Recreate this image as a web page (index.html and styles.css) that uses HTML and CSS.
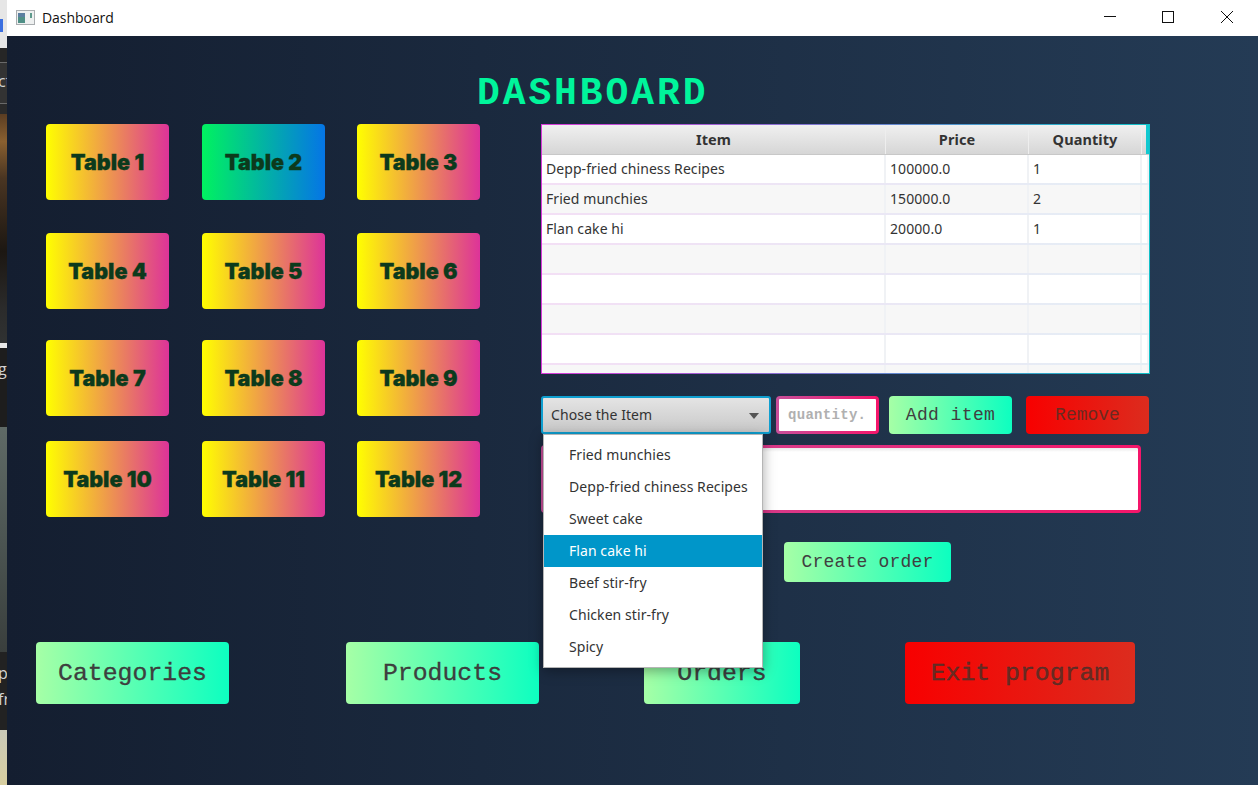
FILE: index.html
```html
<!DOCTYPE html>
<html lang="en">
<head>
<meta charset="utf-8">
<title>Dashboard</title>
<link rel="stylesheet" href="styles.css">
</head>
<body>
<div class="screen">
  <aside class="desktop-strip">
    <div class="strip strip-top"><span class="strip-blue"></span></div>
    <div class="strip strip-bar-a"></div>
    <div class="strip strip-bar-b"><span class="strip-text">ct</span></div>
    <div class="strip strip-bar-c"></div>
    <div class="strip strip-photo-brown"></div>
    <div class="strip strip-white"></div>
    <div class="strip strip-dark"><span class="strip-text">ge</span></div>
    <div class="strip strip-photo-grey"></div>
    <div class="strip strip-dark2"><span class="strip-text">p</span><span class="strip-text">fr</span></div>
    <div class="strip strip-photo-light"></div>
  </aside>
  <div class="window">
    <header class="titlebar">
      <svg class="app-icon" width="20" height="16" viewBox="0 0 20 16">
        <rect x="0.5" y="0.5" width="18" height="14" fill="#eef0f0" stroke="#a9adb0"/>
        <rect x="2" y="3" width="7" height="10" fill="#4f8f86"/>
        <rect x="2" y="3" width="7" height="4" fill="#5b7fa0"/>
        <rect x="14" y="3" width="2" height="5" fill="#5e9a8c"/>
      </svg>
      <span class="title-text">Dashboard</span>
      <div class="window-controls">
        <svg class="ctl" width="60" height="36" viewBox="0 0 60 36"><path d="M27 16.5H39" stroke="#111" fill="none"/></svg>
        <svg class="ctl" width="60" height="36" viewBox="0 0 60 36"><rect x="25.5" y="11.5" width="11" height="11" stroke="#111" fill="none"/></svg>
        <svg class="ctl" width="60" height="36" viewBox="0 0 60 36"><path d="M24 11L36 23M36 11L24 23" stroke="#111" fill="none"/></svg>
      </div>
    </header>
    <main class="content">
      <h1 class="heading">DASHBOARD</h1>
      <div class="middle">
        <section class="tables">
          <div class="table-row row-a">
            <button class="tbl">Table 1</button><button class="tbl tbl-busy">Table 2</button><button class="tbl">Table 3</button>
          </div>
          <div class="table-row row-b">
            <button class="tbl">Table 4</button><button class="tbl">Table 5</button><button class="tbl">Table 6</button>
          </div>
          <div class="table-row row-c">
            <button class="tbl">Table 7</button><button class="tbl">Table 8</button><button class="tbl">Table 9</button>
          </div>
          <div class="table-row row-d">
            <button class="tbl">Table 10</button><button class="tbl">Table 11</button><button class="tbl">Table 12</button>
          </div>
        </section>
        <section class="order">
          <div class="grid-box">
            <div class="grid-head">
              <div class="hcell c1">Item</div><div class="hcell c2">Price</div><div class="hcell c3">Quantity</div><div class="hcell c4"></div>
            </div>
            <div class="grid-row"><div class="cell c1">Depp-fried chiness Recipes</div><div class="cell c2">100000.0</div><div class="cell c3">1</div><div class="cell c4"></div></div>
            <div class="grid-row odd"><div class="cell c1">Fried munchies</div><div class="cell c2">150000.0</div><div class="cell c3">2</div><div class="cell c4"></div></div>
            <div class="grid-row"><div class="cell c1">Flan cake hi</div><div class="cell c2">20000.0</div><div class="cell c3">1</div><div class="cell c4"></div></div>
            <div class="grid-row odd"><div class="cell c1"></div><div class="cell c2"></div><div class="cell c3"></div><div class="cell c4"></div></div>
            <div class="grid-row"><div class="cell c1"></div><div class="cell c2"></div><div class="cell c3"></div><div class="cell c4"></div></div>
            <div class="grid-row odd"><div class="cell c1"></div><div class="cell c2"></div><div class="cell c3"></div><div class="cell c4"></div></div>
            <div class="grid-row"><div class="cell c1"></div><div class="cell c2"></div><div class="cell c3"></div><div class="cell c4"></div></div>
            <div class="grid-row odd"><div class="cell c1"></div><div class="cell c2"></div><div class="cell c3"></div><div class="cell c4"></div></div>
          </div>
          <div class="controls">
            <div class="combo-wrap">
              <div class="combo"><span>Chose the Item</span><i class="arrow"></i></div>
              <ul class="menu">
                <li>Fried munchies</li>
                <li>Depp-fried chiness Recipes</li>
                <li>Sweet cake</li>
                <li class="selected">Flan cake hi</li>
                <li>Beef stir-fry</li>
                <li>Chicken stir-fry</li>
                <li>Spicy</li>
              </ul>
            </div>
            <div class="qty">quantity.</div>
            <button class="btn btn-green btn-small add">Add item</button>
            <button class="btn btn-red btn-small remove">Remove</button>
          </div>
          <div class="note"></div>
          <button class="btn btn-green btn-small create">Create order</button>
        </section>
      </div>
      <nav class="bottom">
        <button class="btn btn-green btn-big b1">Categories</button>
        <button class="btn btn-green btn-big b2">Products</button>
        <button class="btn btn-green btn-big b3">Orders</button>
        <button class="btn btn-red btn-big b4">Exit program</button>
      </nav>
    </main>
  </div>
</div>
</body>
</html>
```
FILE: styles.css
```css
* { box-sizing: border-box; }
html, body { margin: 0; padding: 0; }
body { width: 1258px; height: 785px; overflow: hidden; font-family: "Open Sans", sans-serif; }
.screen { display: flex; width: 1258px; height: 785px; }

.desktop-strip { width: 7px; flex: none; display: flex; flex-direction: column; overflow: hidden; }
.strip { flex: none; overflow: hidden; display: flex; flex-direction: column; font-family: "Open Sans", sans-serif; font-size: 16px; color: #d2d2d2; }
.strip-text { white-space: nowrap; margin-left: -2px; line-height: 26px; }
.strip-top { height: 48px; background: #e6e6e6; }
.strip-blue { display: block; width: 3px; height: 13px; margin-top: 19px; background: #3b6fe0; }
.strip-bar-a { height: 14px; background: #262626; }
.strip-bar-b { height: 42px; background: #333; border-top: 1px solid #6a6a6a; border-bottom: 1px solid #6a6a6a; padding-top: 5px; }
.strip-bar-c { height: 10px; background: #2a2a2a; }
.strip-photo-brown { height: 229px; background: linear-gradient(180deg, #5a3d22, #8a6030 12%, #4a3522 28%, #1c1712 60%, #2b2b2b 85%, #303232); }
.strip-white { height: 5px; background: #e8e8e8; }
.strip-dark { height: 79px; background: #1d1d1d; padding-top: 8px; }
.strip-photo-grey { height: 225px; background: linear-gradient(180deg, #5f6a66, #4c5552 50%, #3a3f3d); }
.strip-dark2 { height: 78px; background: #222; padding-top: 8px; }
.strip-photo-light { height: 55px; background: linear-gradient(180deg, #c9c9b8, #d8cfa0); }

.window { flex: none; width: 1251px; height: 785px; display: flex; flex-direction: column; }
.titlebar { flex: none; height: 36px; background: #fff; display: flex; align-items: center; padding-left: 9px; }
.app-icon { flex: none; margin-right: 6px; }
.title-text { font-family: "Open Sans", sans-serif; font-size: 14px; color: #111; padding-bottom: 2px; letter-spacing: -.05px; }
.window-controls { margin-left: auto; display: flex; padding-right: 1px; }
.ctl { display: block; }

.content { flex: 1; background: linear-gradient(90deg, #141e30, #243b55); display: flex; flex-direction: column; position: relative; }
.heading { margin: 36px 0 0 470px; height: 52px; font: 700 38px/44px "Liberation Mono", monospace; color: #00f59b; letter-spacing: 2.9px; }

.middle { display: flex; flex: none; }
.tables { width: 534px; flex: none; padding-left: 39px; }
.table-row { display: flex; }
.row-b { margin-top: 33px; }
.row-c { margin-top: 31px; }
.row-d { margin-top: 25px; }
.tbl { width: 123px; height: 76px; margin: 0 33px 0 0; padding: 0; border: 0; border-radius: 4px; background: linear-gradient(90deg, #ffff00, #dd3399); font: 900 21.5px/26px Inter, sans-serif; color: #0c3a1c; -webkit-text-stroke: .3px #0c3a1c; }
.tbl:nth-child(2) { margin-right: 32px; }
.tbl-busy { background: linear-gradient(90deg, #00f260, #0575e6); }

.order { width: 610px; flex: none; display: flex; flex-direction: column; align-items: flex-start; font-size: 14px; }
.grid-box { width: 609px; height: 250px; overflow: hidden; border: 1px solid transparent; background: linear-gradient(#fff, #fff) padding-box, linear-gradient(90deg, #d83ad8, #10c0c8) border-box; font-family: "Noto Sans", sans-serif; color: #333; letter-spacing: .07px; }
.grid-head { display: flex; height: 30px; background: linear-gradient(180deg, #f0f0f0, #d6d6d6); border-bottom: 1px solid #c8c8c8; font-weight: 700; font-size: 14.5px; }
.hcell { text-align: center; line-height: 29px; border-right: 1px solid #eeeeee; }
.hcell.c4 { border-right: 3px solid #10c8d0; }
.grid-row { display: flex; height: 30px; border-bottom: 2px solid; border-image: linear-gradient(90deg, #f3dff5, #e4eef5) 1; }
.grid-row.odd { background: #f7f7f7; }
.cell { line-height: 28px; padding-left: 4px; border-right: 2px solid #f0f2f5; }
.c1 { width: 344px; flex: none; }
.c2 { width: 143px; flex: none; }
.c3 { width: 113px; flex: none; }
.c4 { flex: 1; }

.controls { display: flex; margin-top: 22px; height: 38px; }
.combo-wrap { position: relative; width: 230px; margin-right: 5px; }
.combo { height: 38px; border: 2px solid #0f9fd0; border-radius: 3px; background: linear-gradient(180deg, #e4e4e4, #c8c8c8); display: flex; align-items: center; justify-content: space-between; padding: 0 10px 1px 8px; color: #333; font-family: "Noto Sans", sans-serif; letter-spacing: .07px; }
.arrow { width: 0; height: 0; border: 5px solid transparent; border-top: 6px solid #555; border-bottom: 0; margin-top: 2px; }
.menu { position: absolute; z-index: 5; left: 2px; top: 38px; width: 220px; margin: 0; padding: 4px 0 4px; list-style: none; background: #fff; border: 1px solid #b5b5b5; box-shadow: 0 3px 12px rgba(0,0,0,.35); font-family: "Noto Sans", sans-serif; color: #333; letter-spacing: .07px; }
.menu li { height: 32px; line-height: 32px; padding-left: 25px; }
.menu li.selected { background: #0096c9; color: #fff; }

.qty { width: 103px; height: 38px; margin-right: 10px; border: 3px solid transparent; border-radius: 4px; background: linear-gradient(#fff, #fff) padding-box, linear-gradient(90deg, #c84f9a, #f5156a) border-box; color: #b0b0b0; font: 700 14px/32px "Liberation Mono", monospace; padding-left: 9px; letter-spacing: .3px; }
.btn { border: 0; padding: 0; border-radius: 4px; font-family: "Liberation Mono", monospace; color: #404040; }
.btn-green { background: linear-gradient(90deg, #a6ffa6, #0dffc0); }
.btn-red { background: linear-gradient(90deg, #f80000, #dc2c1e); color: #6b2a20; }
.btn-small { font-size: 18px; height: 38px; }
.add { width: 123px; margin-right: 14px; letter-spacing: .4px; }
.remove { width: 123px; }
.note { width: 600px; height: 68px; margin-top: 11px; border: 3px solid transparent; border-radius: 4px; background: linear-gradient(#e8e8e8, #fff 4px, #fff) padding-box, linear-gradient(90deg, #c84f9a, #f5156a) border-box; }
.create { width: 167px; height: 40px; margin: 29px 0 0 243px; letter-spacing: .2px; }

.bottom { display: flex; margin-top: 60px; padding-left: 29px; }
.btn-big { height: 62px; font-size: 24.8px; font-weight: 400; -webkit-text-stroke: .3px #333; }
.b1 { width: 193px; margin-right: 117px; }
.b2 { width: 193px; margin-right: 105px; }
.b3 { width: 156px; margin-right: 105px; }
.b4 { width: 230px; }
```
